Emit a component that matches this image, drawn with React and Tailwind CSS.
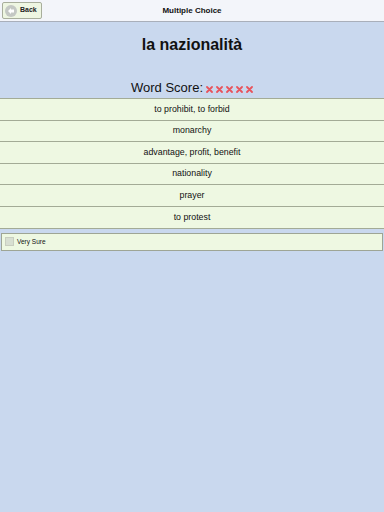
import React from "react";

const answers = [
  "to prohibit, to forbid",
  "monarchy",
  "advantage, profit, benefit",
  "nationality",
  "prayer",
  "to protest",
];

const Cross = () => (
  <svg width="7" height="7" viewBox="0 0 7 7" className="inline-block">
    <path d="M1 1 L6 6 M6 1 L1 6" stroke="#e8545c" strokeWidth="1.8" strokeLinecap="round" />
  </svg>
);

const App = () => {
  return (
    <div
      className="w-[384px] h-[512px] bg-[#c9d8ee] flex flex-col"
      style={{ fontFamily: '"Liberation Sans", Arial, sans-serif' }}
    >
      {/* top bar */}
      <div className="relative h-[22px] bg-[#f3f5fa] border-b border-[#a9afba] flex items-center justify-center">
        <button className="absolute left-[2px] top-[2px] h-[17px] w-[40px] bg-[#eef6e2] border border-[#a8ae9c] rounded-[2px] flex items-center gap-[3px] pl-[2px]">
          <span className="w-[12px] h-[12px] rounded-full bg-[#c4c8c4] flex items-center justify-center">
            <svg width="8" height="8" viewBox="0 0 8 8">
              <path d="M1 4 L4 1 L4 2.6 L7 2.6 L7 5.4 L4 5.4 L4 7 Z" fill="#ffffff" />
            </svg>
          </span>
          <span className="text-[7px] font-bold text-[#222]">Back</span>
        </button>
        <span className="text-[8px] font-bold text-[#111]">Multiple Choice</span>
      </div>

      <div className="h-[46px] flex items-center justify-center">
        <h1 className="text-[16px] font-bold text-[#111] leading-none">la nazionalità</h1>
      </div>

      <div className="h-[30px] flex items-end justify-center pb-[4px] gap-[3px]">
        <span className="text-[13px] text-[#111] leading-none">Word Score:</span>
        <span className="flex gap-[3px] items-center mb-[1px]">
          <Cross />
          <Cross />
          <Cross />
          <Cross />
          <Cross />
        </span>
      </div>

      <div className="border-t border-[#a3ab96]">
        {answers.map((a) => (
          <div
            key={a}
            className="h-[21.6px] bg-[#eef8e2] border-b border-[#a3ab96] flex items-center justify-center text-[8.8px] text-[#111]"
          >
            {a}
          </div>
        ))}
      </div>

      <div className="mt-[4px] mx-[1px] h-[18px] bg-[#eef8e2] border border-[#9ea595] flex items-center gap-[3px] pl-[3px]">
        <span className="w-[9px] h-[9px] bg-[#d8dfd2] border border-[#c8cec0]" />
        <span className="text-[6.5px] text-[#111]">Very Sure</span>
      </div>
    </div>
  );
};

export default App;
